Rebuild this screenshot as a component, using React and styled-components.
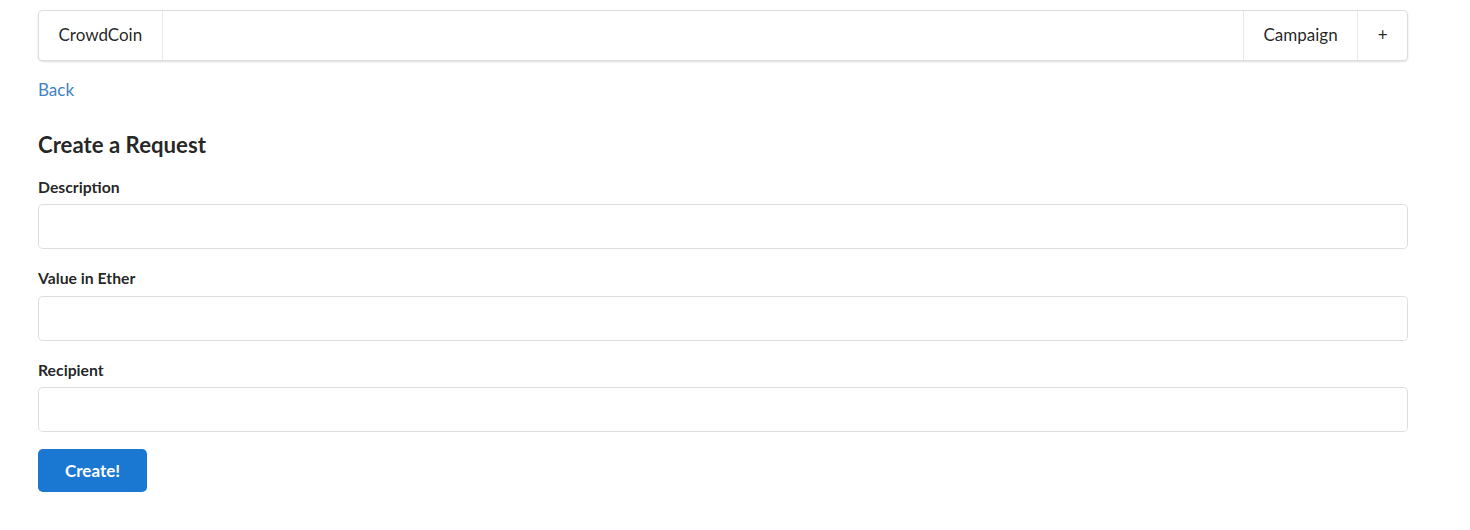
import React from "react";
import styled, { createGlobalStyle } from "styled-components";

const Global = createGlobalStyle`
  html { font-size: 17px; }
  body {
    margin: 0;
    background: #fff;
    font-family: Lato, "Helvetica Neue", Arial, sans-serif;
    font-size: 17px;
    line-height: 1.4285em;
    color: rgba(0, 0, 0, 0.87);
  }
  * { box-sizing: border-box; }
`;

const Container = styled.div`
  width: 1370px;
  margin-left: 38px;
`;

const Menu = styled.nav`
  display: flex;
  margin: 10px 0 1rem;
  min-height: 50.6px;
  background: #fff;
  border: 1px solid rgba(34, 36, 38, 0.15);
  box-shadow: 0 1px 2px 0 rgba(34, 36, 38, 0.15);
  border-radius: 0.28571429rem;
`;

const MenuItem = styled.a`
  position: relative;
  display: flex;
  align-items: center;
  padding: 15px 19.5px 17px;
  line-height: 1;
  color: rgba(0, 0, 0, 0.87);
  text-decoration: none;
  cursor: pointer;
  border-left: ${(p) => (p.$divLeft ? "1px solid rgba(34,36,38,.1)" : "none")};
  border-right: ${(p) => (p.$divRight ? "1px solid rgba(34,36,38,.1)" : "none")};
`;

const RightMenu = styled.div`
  display: flex;
  margin-left: auto;
`;

const BackLink = styled.a`
  display: block;
  color: #4183c4;
  text-decoration: none;
  width: max-content;
  cursor: pointer;
`;

const Title = styled.h3`
  font-family: Lato, "Helvetica Neue", Arial, sans-serif;
  font-size: 22.2px;
  font-weight: 700;
  line-height: 28px;
  margin: 29px 0 16px;
  padding: 0;
  color: rgba(0, 0, 0, 0.87);
`;

const Form = styled.form`
  display: flex;
  flex-direction: column;
  align-items: flex-start;
`;

const Field = styled.div`
  width: 100%;
  margin-bottom: 17px;
`;

const Label = styled.label`
  display: block;
  margin: 0 0 0.28571429rem;
  font-size: 0.92857143em;
  font-weight: 700;
  color: rgba(0, 0, 0, 0.87);
`;

const Input = styled.input`
  display: block;
  width: 100%;
  height: 45px;
  margin: 0;
  padding: 0.67857143em 1em;
  font-family: Lato, "Helvetica Neue", Arial, sans-serif;
  font-size: 1em;
  line-height: 1.21428571em;
  color: rgba(0, 0, 0, 0.87);
  background: #fff;
  border: 1px solid rgba(34, 36, 38, 0.15);
  border-radius: 0.28571429rem;
  outline: none;
`;

const Button = styled.button`
  height: 43px;
  padding: 0 27px;
  margin: 0;
  font-family: Lato, "Helvetica Neue", Arial, sans-serif;
  font-size: 1rem;
  font-weight: 700;
  line-height: 1em;
  color: #fff;
  background: #1a77d2;
  border: none;
  border-radius: 0.28571429rem;
  cursor: pointer;
`;

export default function App() {
  return (
    <>
      <Global />
      <Container>
        <Menu>
          <MenuItem $divRight>CrowdCoin</MenuItem>
          <RightMenu>
            <MenuItem $divLeft>Campaign</MenuItem>
            <MenuItem $divLeft>+</MenuItem>
          </RightMenu>
        </Menu>
        <BackLink>Back</BackLink>
        <Title>Create a Request</Title>
        <Form onSubmit={(e) => e.preventDefault()}>
          <Field>
            <Label>Description</Label>
            <Input />
          </Field>
          <Field>
            <Label>Value in Ether</Label>
            <Input />
          </Field>
          <Field>
            <Label>Recipient</Label>
            <Input />
          </Field>
          <Button type="submit">Create!</Button>
        </Form>
      </Container>
    </>
  );
}
